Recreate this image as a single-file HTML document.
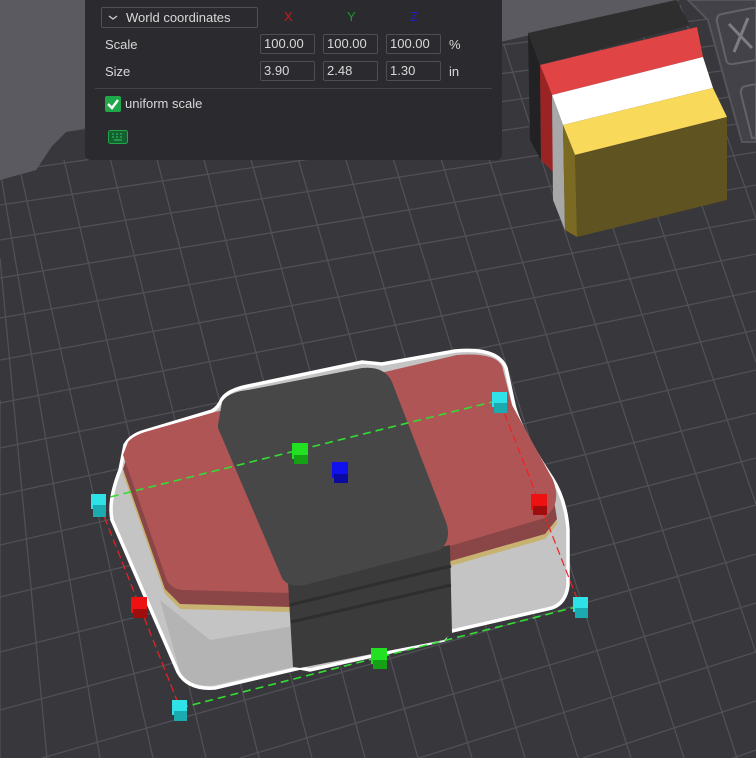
<!DOCTYPE html>
<html><head><meta charset="utf-8"><style>
html,body{margin:0;padding:0;width:756px;height:758px;overflow:hidden;background:#37373c;font-family:"Liberation Sans",sans-serif;position:relative}
.panel{position:absolute;left:85px;top:0;width:417px;height:160px;background:#2b2b2f;border-radius:0 0 6px 6px;color:#d8d8d8;font-size:13px;overflow:hidden}
.dd{position:absolute;left:16px;top:7px;width:155px;height:19px;border:1px solid #505055;border-radius:2px;color:#d8d8d8}
.dd span{position:absolute;left:24px;top:2px}
.lbl{position:absolute;font-size:13px}
.box{position:absolute;border:1px solid #4e4e53;border-radius:2px;font-size:13px;line-height:18px;padding-left:3px;box-sizing:border-box;width:55px;height:20px;color:#d8d8d8}
</style></head><body>
<svg width="756" height="758" viewBox="0 0 756 758" style="position:absolute;left:0;top:0;overflow:hidden">
<rect x="0" y="0" width="756" height="758" fill="#5a5a60"/>
<polygon points="0,180 36,170 52,146 66,132 90,127 500,42 680,0 756,0 756,758 0,758" fill="#37373c"/>
<g stroke="#505056" stroke-width="1.3">
<line x1="0" y1="400" x2="0" y2="758"/><line x1="0" y1="258" x2="47" y2="758"/><line x1="0" y1="170" x2="100" y2="758"/><line x1="20" y1="170" x2="153" y2="758"/><line x1="64" y1="160" x2="206" y2="758"/><line x1="108" y1="150" x2="259" y2="758"/><line x1="152" y1="140" x2="312" y2="758"/><line x1="196" y1="130" x2="365" y2="758"/><line x1="240" y1="120" x2="418" y2="758"/><line x1="284" y1="110" x2="472" y2="758"/><line x1="328" y1="100" x2="525" y2="758"/><line x1="372" y1="90" x2="578" y2="758"/><line x1="416" y1="80" x2="631" y2="758"/><line x1="460" y1="70" x2="684" y2="758"/><line x1="504" y1="45" x2="737" y2="758"/><line x1="548" y1="35" x2="756" y2="653"/><line x1="592" y1="25" x2="756" y2="504"/><line x1="636" y1="15" x2="756" y2="362"/><line x1="680" y1="5" x2="756" y2="218"/><line x1="724" y1="0" x2="756" y2="87"/>
<line x1="0" y1="108" x2="756" y2="13"/><line x1="0" y1="140" x2="756" y2="40"/><line x1="0" y1="172" x2="756" y2="66"/><line x1="0" y1="205" x2="756" y2="93"/><line x1="0" y1="240" x2="756" y2="121"/><line x1="0" y1="278" x2="756" y2="152"/><line x1="0" y1="318" x2="756" y2="185"/><line x1="0" y1="360" x2="756" y2="219"/><line x1="0" y1="403" x2="756" y2="254"/><line x1="0" y1="448" x2="756" y2="291"/><line x1="0" y1="495" x2="756" y2="330"/><line x1="0" y1="545" x2="756" y2="370"/><line x1="0" y1="597" x2="756" y2="413"/><line x1="0" y1="652" x2="756" y2="458"/><line x1="0" y1="710" x2="756" y2="505"/><line x1="42" y1="758" x2="756" y2="554"/><line x1="240" y1="758" x2="756" y2="603"/><line x1="419" y1="758" x2="756" y2="652"/><line x1="583" y1="758" x2="756" y2="701"/><line x1="733" y1="758" x2="756" y2="750"/>
</g>
<polygon points="0,180 36,170 52,146 66,132 90,127 500,42 680,0 0,0" fill="#5a5a60"/>
<!-- right panel -->
<polygon points="688,0 756,0 756,142 742,142 708,20" fill="#424248" stroke="#55555b" stroke-width="2"/>
<path d="M722,14 L752,8 L756,8 L756,60 L733,64 Q727,65 726,59 L717,22 Q716,15 722,14 Z" fill="none" stroke="#626268" stroke-width="2"/>
<path d="M729 24 L752 48 M748 18 L734 52" stroke="#7c7c82" stroke-width="3"/>
<path d="M746,86 L756,84 L756,138 L752,138 L741,94 Q740,87 746,86 Z" fill="none" stroke="#626268" stroke-width="2"/>
<!-- cube -->
<polygon points="528,33 676,0 690,25 540,65" fill="#2e2e2f"/>
<polygon points="540,65 697,27 703,57 552,95" fill="#e04444"/>
<polygon points="552,95 703,57 713,88 563,125" fill="#ffffff"/>
<polygon points="563,125 713,88 727,117 575,155" fill="#f8d95a"/>
<polygon points="575,155 727,117 727,200 577,237" fill="#5f5322"/>
<polygon points="528,33 540,65 541,160 530,140" fill="#222224"/>
<polygon points="540,65 552,95 553,172 541,160" fill="#9a2424"/>
<polygon points="552,95 563,125 565,230 553,200" fill="#a8a8a8"/>
<polygon points="563,125 575,155 577,237 565,230" fill="#7a6a22"/>
<!-- model base -->
<path d="M120,470 L125,445 Q130,436 142,432 L212,411 Q218,408 222,399 Q228,390 248,386 L362,362 L382,364 L455,351 Q498,347 506,368 L514,405 Q520,430 552,478 Q566,500 568,530 L568,585 Q566,603 552,608 L452,631 Q447,633 444,640 L310,670 L300,668 L215,688 Q188,690 178,672 L112,520 Q108,500 120,470 Z" fill="#c4c4c4" stroke="#ffffff" stroke-width="3.5"/>
<path d="M160,600 L210,640 L300,625 L300,665 L215,685 Q190,688 180,672 Z" fill="#b4b4b4"/>
<!-- yellow strip -->
<path d="M123,474 L128,459 L215,431 L457,374 L500,382 L512,424 L553,499 L557,524 L545,539 L290,612 L180,609 L165,594 Z" fill="#c8b272"/>
<!-- red side -->
<path d="M123,469 L128,454 L215,426 L457,369 L500,377 L512,419 L553,494 L557,519 L545,534 L290,607 L180,604 L165,589 Z" fill="#8a4646"/>
<!-- red top -->
<path d="M123,455 L128,442 Q133,436 145,432 L215,412 L457,355 Q495,352 502,366 L512,405 L553,480 Q560,498 552,510 L545,518 L290,593 L182,590 Q168,588 165,575 Z" fill="#b05555"/>
<!-- dark block front -->
<polygon points="288,582 450,545 452,633 444,640 300,668 293,667" fill="#3b3b3c"/>
<path d="M290,605 L451,566 M291,622 L451,585" stroke="#2e2e2f" stroke-width="3"/>
<!-- dark block top -->
<path d="M218,425 L222,402 Q228,392 248,390 L362,368 Q385,366 392,382 L446,522 Q452,540 440,550 L305,585 Q288,588 282,578 L218,428 Z" fill="#474748"/>
<!-- bounding box -->
<g stroke-width="1.6" fill="none">
<line x1="98" y1="500" x2="500" y2="400" stroke="#33dd33" stroke-dasharray="8,5"/>
<line x1="180" y1="708" x2="580" y2="606" stroke="#33dd33" stroke-dasharray="8,5"/>
<line x1="100" y1="506" x2="180" y2="708" stroke="#ee2222" stroke-dasharray="8,4" stroke-width="1.2"/>
<line x1="500" y1="402" x2="580" y2="606" stroke="#ee2222" stroke-dasharray="8,4" stroke-width="1.2"/>
</g>
<g>
<rect x="91" y="494" width="15" height="15" fill="#2fe2e8"/><rect x="93" y="505" width="13" height="12" fill="#1aaab0"/>
<rect x="492" y="392" width="15" height="15" fill="#2fe2e8"/><rect x="494" y="403" width="13" height="10" fill="#1aaab0"/>
<rect x="573" y="597" width="15" height="15" fill="#2fe2e8"/><rect x="575" y="608" width="13" height="10" fill="#1aaab0"/>
<rect x="172" y="700" width="15" height="15" fill="#2fe2e8"/><rect x="174" y="711" width="13" height="10" fill="#1aaab0"/>
<rect x="292" y="443" width="16" height="16" fill="#22e022"/><rect x="294" y="455" width="14" height="9" fill="#16a016"/>
<rect x="371" y="648" width="16" height="16" fill="#22e022"/><rect x="373" y="660" width="14" height="9" fill="#16a016"/>
<rect x="131" y="597" width="16" height="16" fill="#ee1111"/><rect x="133" y="609" width="14" height="9" fill="#a00d0d"/>
<rect x="531" y="494" width="16" height="16" fill="#ee1111"/><rect x="533" y="506" width="14" height="9" fill="#a00d0d"/>
<rect x="332" y="462" width="16" height="16" fill="#1111ee"/><rect x="334" y="474" width="14" height="9" fill="#0a0aa0"/>
</g>
</svg>
<div class="panel">
<div class="dd"><svg width="14" height="19" style="position:absolute;left:4px;top:0"><path d="M3 8 L7 11 L11 8" stroke="#ccc" stroke-width="1.3" fill="none"/></svg><span>World coordinates</span></div>
<div class="lbl" style="left:199px;top:9px;color:#d01818">X</div>
<div class="lbl" style="left:262px;top:9px;color:#189a2a">Y</div>
<div class="lbl" style="left:325px;top:9px;color:#2020c8">Z</div>
<div class="lbl" style="left:20px;top:37px">Scale</div>
<div class="lbl" style="left:20px;top:64px">Size</div>
<div class="box" style="left:175px;top:34px">100.00</div>
<div class="box" style="left:238px;top:34px">100.00</div>
<div class="box" style="left:301px;top:34px">100.00</div>
<div class="lbl" style="left:364px;top:37px">%</div>
<div class="box" style="left:175px;top:61px">3.90</div>
<div class="box" style="left:238px;top:61px">2.48</div>
<div class="box" style="left:301px;top:61px">1.30</div>
<div class="lbl" style="left:364px;top:64px">in</div>
<div style="position:absolute;left:10px;top:88px;width:397px;height:1px;background:#424247"></div>
<div style="position:absolute;left:20px;top:96px;width:16px;height:16px;background:#1fa84a;border-radius:2px"><svg width="16" height="16" style="position:absolute;left:0;top:0"><path d="M3 8 L7 12 L13 4" stroke="#fff" stroke-width="2.4" fill="none"/></svg></div>
<div class="lbl" style="left:40px;top:96px">uniform scale</div>
<svg width="20" height="14" style="position:absolute;left:23px;top:130px"><rect x="0.5" y="0.5" width="19" height="13" rx="2" fill="#155f30" stroke="#1fa84a"/><path d="M4 4h2M8 4h2M12 4h2M4 7h2M8 7h2M12 7h2M6 10h8" stroke="#2cc860" stroke-width="1"/></svg>
</div>
</body></html>
